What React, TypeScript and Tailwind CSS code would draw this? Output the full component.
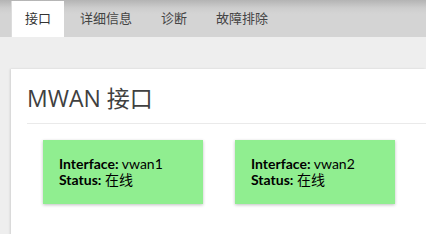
import React from "react";

const tabs = ["接口", "详细信息", "诊断", "故障排除"];

const interfaces = [
  { name: "vwan1", status: "在线" },
  { name: "vwan2", status: "在线" },
];

export default function App() {
  return (
    <div
      className="w-[426px] h-[234px] overflow-hidden bg-[#eeeeee] text-[#404040]"
      style={{ fontFamily: '"Open Sans", "Noto Sans CJK SC", sans-serif' }}
    >
      {/* Tab bar */}
      <div className="h-[37px] flex items-end pl-[12px] gap-[3px] bg-[linear-gradient(to_bottom,#b4b4b4_0px,#cdcdcd_8px,#d4d4d4_14px)]">
        {tabs.map((t, i) => (
          <div
            key={t}
            className={
              "h-[36px] px-[13px] flex items-center text-[13px] " +
              (i === 0 ? "bg-white shadow-[-1px_0_0_#dcdcdc] text-[#333]" : "text-[#444]")
            }
          >
            {t}
          </div>
        ))}
      </div>

      {/* Card */}
      <div className="mt-[32px] ml-[11px] bg-white shadow-[-1px_0_2px_rgba(0,0,0,0.12)] pl-[16px] pt-[13px] h-[200px]">
        <h2 className="text-[23px] leading-[32px] font-normal text-[#404040]">MWAN 接口</h2>
        <div className="mt-[9px] border-t border-[#eaeaea]" />
        <div className="flex gap-[32px] pl-[16px] pt-[16px]">
          {interfaces.map((iface) => (
            <div
              key={iface.name}
              className="w-[160px] h-[64px] bg-[#90ee90] shadow-[0_1px_3px_rgba(0,0,0,0.25)] pl-[16px] pt-[16px] text-[14px] leading-[16px] text-black"
              style={{ fontFamily: 'Lato, "Noto Sans CJK SC", sans-serif' }}
            >
              <div>
                <strong>Interface:</strong> {iface.name}
              </div>
              <div>
                <strong>Status:</strong> {iface.status}
              </div>
            </div>
          ))}
        </div>
      </div>
    </div>
  );
}
